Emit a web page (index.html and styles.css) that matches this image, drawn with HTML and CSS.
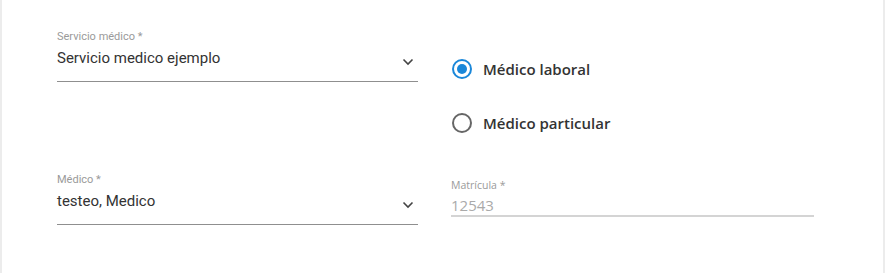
FILE: index.html
```html
<!DOCTYPE html>
<html lang="es">
<head>
<meta charset="utf-8">
<link rel="stylesheet" href="styles.css">
</head>
<body>
<div class="panel">
  <div class="grid">
    <div class="field select-field first">
      <div class="label">Servicio médico *</div>
      <div class="control">
        <span class="value">Servicio medico ejemplo</span>
        <svg class="chev" width="12" height="8" viewBox="0 0 12 8"><path d="M1.5 1.5 L6 6 L10.5 1.5" fill="none" stroke="#444" stroke-width="1.6"/></svg>
      </div>
    </div>
    <div class="radios">
      <label class="radio checked"><span class="dot"></span><span class="rtext">Médico laboral</span></label>
      <label class="radio"><span class="dot"></span><span class="rtext">Médico particular</span></label>
    </div>
    <div class="field select-field second">
      <div class="label">Médico *</div>
      <div class="control">
        <span class="value">testeo, Medico</span>
        <svg class="chev" width="12" height="8" viewBox="0 0 12 8"><path d="M1.5 1.5 L6 6 L10.5 1.5" fill="none" stroke="#444" stroke-width="1.6"/></svg>
      </div>
    </div>
    <div class="field text-field">
      <div class="label os">Matrícula *</div>
      <div class="control disabled">
        <span class="value os">12543</span>
      </div>
    </div>
  </div>
</div>
</body>
</html>
```
FILE: styles.css
```css
html, body {
  margin: 0;
  padding: 0;
  background: #fff;
}
.panel {
  height: 273px;
  box-sizing: border-box;
  border-left: 2px solid #ececec;
  border-right: 2px solid #ececec;
  margin-right: 1px;
  padding-left: 55px;
}
.grid {
  display: grid;
  grid-template-columns: 361px 363px;
  grid-template-rows: 134px auto;
  column-gap: 33px;
}
.field {
  font-family: Roboto, "Liberation Sans", sans-serif;
}
.label {
  font-size: 11px;
  color: #9a9a9a;
  line-height: 13px;
}
.control {
  display: flex;
  align-items: center;
  justify-content: space-between;
  border-bottom: 1px solid #8f8f8f;
}
.value {
  font-size: 15px;
  color: #333;
}
.select-field .control {
  height: 30px;
  padding-bottom: 8px;
}
.chev {
  margin-right: 4px;
  margin-top: 8px;
}
.first {
  padding-top: 30px;
}
.second {
  padding-top: 39px;
}
.radios {
  padding-top: 58px;
  display: flex;
  flex-direction: column;
  gap: 32px;
  font-family: "Open Sans", sans-serif;
}
.radio {
  display: flex;
  align-items: center;
  height: 22px;
}
.dot {
  width: 16px;
  height: 16px;
  border: 2px solid #666;
  border-radius: 50%;
  margin-left: 1px;
  margin-right: 11px;
  box-sizing: content-box;
  position: relative;
}
.radio.checked .dot {
  border-color: #1a87d9;
}
.radio.checked .dot::after {
  content: "";
  position: absolute;
  left: 3px;
  top: 3px;
  width: 10px;
  height: 10px;
  border-radius: 50%;
  background: #1a87d9;
}
.rtext {
  font-size: 15px;
  font-weight: 600;
  color: #333;
}
.text-field {
  padding-top: 45px;
}
.os {
  font-family: "Open Sans", sans-serif;
}
.label.os {
  font-size: 10.5px;
  color: #9a9a9a;
}
.text-field .control {
  border-bottom: 2px solid #d4d4d4;
  height: 19px;
  padding-top: 3px;
  padding-bottom: 1px;
}
.text-field .value {
  color: #aaa;
  font-size: 15px;
}
```
